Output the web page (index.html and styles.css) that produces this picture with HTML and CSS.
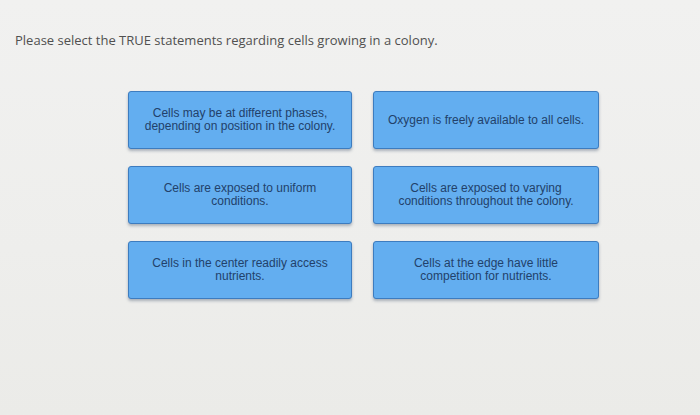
FILE: index.html
```html
<!DOCTYPE html>
<html lang="en">
<head>
<meta charset="utf-8">
<title>Cell colony question</title>
<link rel="stylesheet" href="styles.css">
</head>
<body>
<main class="question">
  <p class="prompt">Please select the TRUE statements regarding cells growing in a colony.</p>
  <div class="choices">
    <button class="choice">Cells may be at different phases,<br>depending on position in the colony.</button>
    <button class="choice">Oxygen is freely available to all cells.</button>
    <button class="choice">Cells are exposed to uniform<br>conditions.</button>
    <button class="choice">Cells are exposed to varying<br>conditions throughout the colony.</button>
    <button class="choice">Cells in the center readily access<br>nutrients.</button>
    <button class="choice">Cells at the edge have little<br>competition for nutrients.</button>
  </div>
</main>
</body>
</html>
```
FILE: styles.css
```css
html, body {
  margin: 0;
  height: 100%;
}

body {
  background: linear-gradient(180deg, #f1f1f0 0%, #eeeeec 60%, #ebebe8 100%);
  font-family: "Liberation Sans", Arial, sans-serif;
}

.question {
  padding: 32px 0 0 15px;
}

.prompt {
  margin: 0;
  font-family: "Open Sans", "Liberation Sans", sans-serif;
  font-size: 13px;
  line-height: 16px;
  color: #505050;
}

.choices {
  display: grid;
  grid-template-columns: 224px 226px;
  grid-auto-rows: 58px;
  column-gap: 21px;
  row-gap: 17px;
  margin: 43px 0 0 113px;
}

.choice {
  display: flex;
  align-items: center;
  justify-content: center;
  margin: 0;
  padding: 0 6px;
  background: #63aef0;
  border: 1px solid #3d7cbf;
  border-radius: 3px;
  box-shadow: 0 2px 3px rgba(40, 60, 90, 0.35);
  font-family: "Liberation Sans", Arial, sans-serif;
  font-size: 12px;
  line-height: 13px;
  color: #22416a;
  text-align: center;
}
```
